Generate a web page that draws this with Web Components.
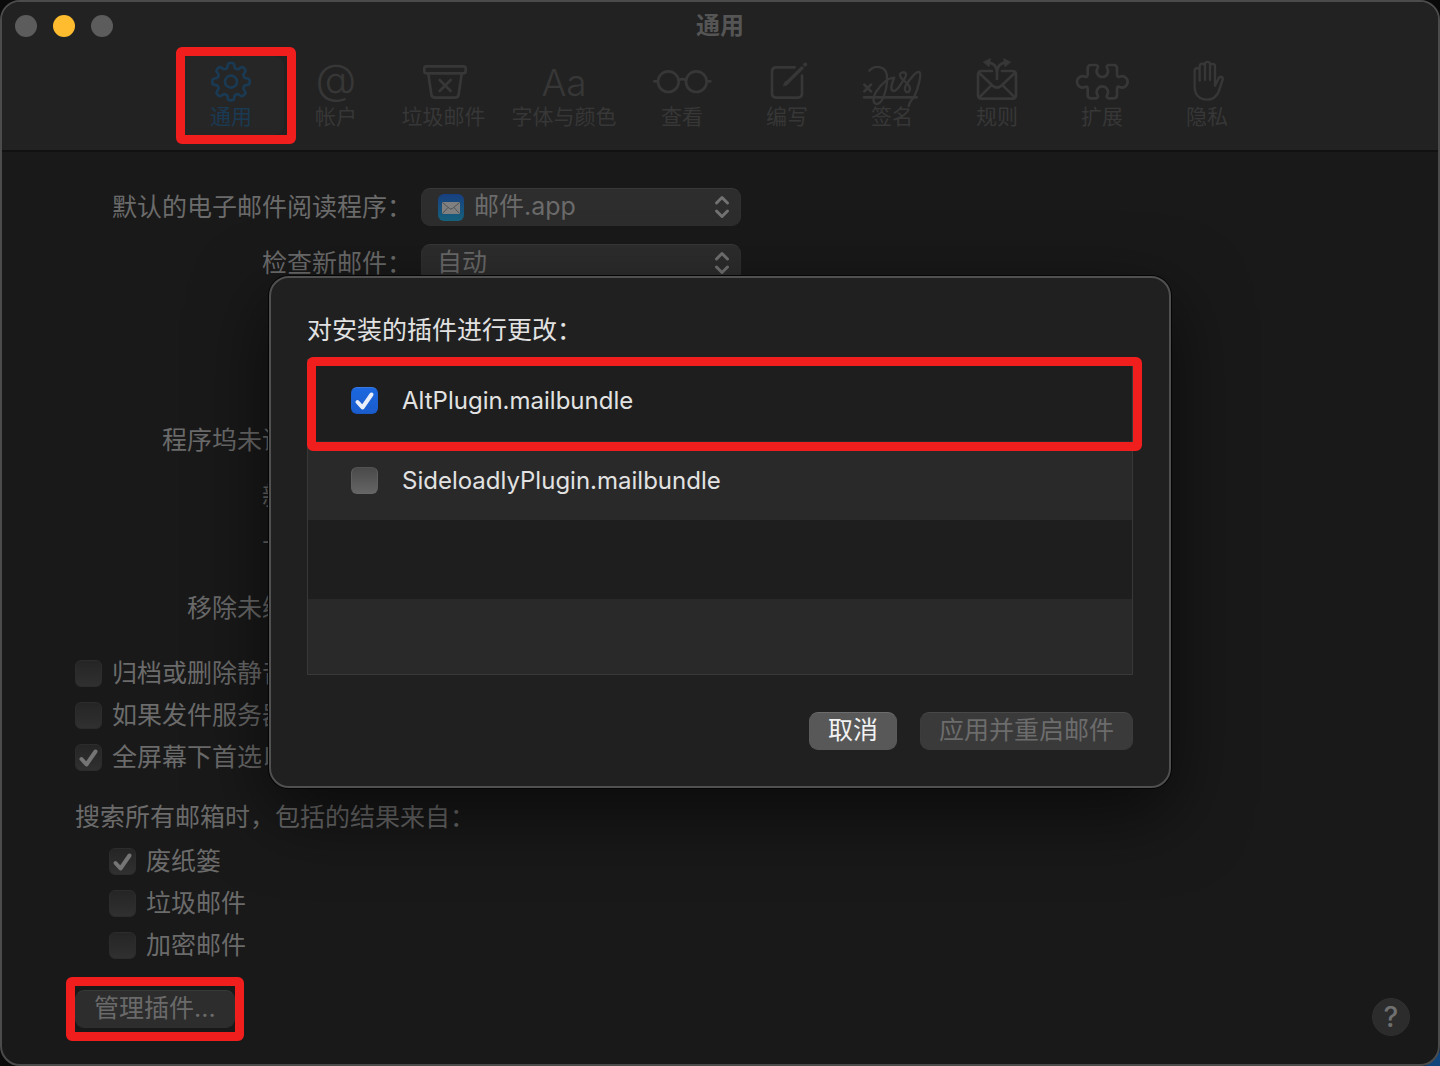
<!DOCTYPE html>
<html lang="zh-CN">
<head>
<meta charset="utf-8">
<title>通用</title>
<style>
  body {
    margin: 0;
    background: radial-gradient(circle at 100% 100%, #12457c 0 12px, #0a0a0a 20px);
    font-family: Inter, "Noto Sans CJK SC", sans-serif;
    font-size: 25px;
    line-height: 28px;
    color: #6b6b6b;
    --mark: #f01e1c;
  }
</style>
</head>
<body>
<settings-window heading="通用">
  <tool-item slot="tools" icon="gear" label="通用" selected></tool-item>
  <tool-item slot="tools" icon="at" label="帐户"></tool-item>
  <tool-item slot="tools" icon="junk" label="垃圾邮件"></tool-item>
  <tool-item slot="tools" icon="fonts" label="字体与颜色"></tool-item>
  <tool-item slot="tools" icon="glasses" label="查看"></tool-item>
  <tool-item slot="tools" icon="compose" label="编写"></tool-item>
  <tool-item slot="tools" icon="signature" label="签名"></tool-item>
  <tool-item slot="tools" icon="rules" label="规则"></tool-item>
  <tool-item slot="tools" icon="puzzle" label="扩展"></tool-item>
  <tool-item slot="tools" icon="hand" label="隐私"></tool-item>
  <general-pane></general-pane>
  <plugin-sheet slot="sheet"></plugin-sheet>
</settings-window>

<script>
const define = (name, render) => customElements.define(name, class extends HTMLElement {
  connectedCallback() {
    if (this.shadowRoot) return;
    this.attachShadow({ mode: 'open' }).innerHTML = render(this);
  }
});

/* Cog outline: rounded teeth around a centre point */
const cog = (cx, cy, n) => {
  const at = (r, deg) => {
    const a = (deg - 90) * Math.PI / 180;
    return (cx + r * Math.cos(a)).toFixed(1) + ' ' + (cy + r * Math.sin(a)).toFixed(1);
  };
  let d = '';
  for (let i = 0; i < n; i++) {
    const t = i * 360 / n;
    d += (i ? 'L' : 'M') + at(43, t - 15) + 'L' + at(50, t - 11) +
      'Q' + at(56, t - 9) + ' ' + at(56, t - 4) + 'L' + at(56, t + 4) +
      'Q' + at(56, t + 9) + ' ' + at(50, t + 11) + 'L' + at(43, t + 15) +
      'Q' + at(40, t + 22.5) + ' ' + at(43, t + 30);
  }
  return d + 'Z';
};

const ICONS = {
  gear: `<svg viewBox="603 174 180 144"><path d="${cog(693, 245, 8)}"/><circle cx="693" cy="245" r="18"/></svg>`,
  at: '<span class="glyph at">@</span>',
  fonts: '<span class="glyph">Aa</span>',
  junk: '<svg viewBox="69 54 180 144"><rect x="100" y="79" width="124" height="21" rx="6"/><path d="M112 102L121 163Q122 173 133 173H191Q202 173 203 163L212 102M146 120L179 153M179 120L146 153"/></svg>',
  glasses: '<svg viewBox="786 54 180 144"><circle cx="835" cy="125" r="31"/><circle cx="919" cy="125" r="31"/><path d="M866 120Q877 115 888 120M793 124H803M951 124H961"/></svg>',
  compose: '<svg viewBox="54 54 180 144"><path d="M167 82H112Q99 82 99 95V160Q99 173 112 173H176Q189 173 189 160V107"/><path stroke-width="10" d="M140 132L189 84"/><path stroke-width="4" d="M134 137L148 130L141 124Z"/><path stroke-width="11" d="M198 74L199 73"/></svg>',
  signature: '<svg viewBox="369 54 180 144"><path d="M376 134L396 154M396 134L376 154M375 172H533"/><path stroke-width="7" d="M391 92C408 74 438 78 443 102C448 134 434 190 414 192C400 192 401 172 411 156C425 135 443 113 466 113C458 132 452 150 463 153C478 154 484 130 496 117C505 105 502 95 491 97C477 100 483 113 494 121C507 131 520 144 509 156C498 160 495 146 500 137C512 117 531 94 541 96C550 103 535 150 526 169C519 180 512 183 509 198"/></svg>',
  rules: '<svg viewBox="24 54 180 144"><path d="M99 93H68Q57 93 57 104V166Q57 176 68 176H160Q171 176 171 166V104Q171 93 160 93H129M60 98L101 137Q114 148 127 137L168 98M61 172L97 136M167 172L131 136M114 117V96Q112 72 91 68M114 96Q116 72 137 68"/><path class="fill" stroke-width="3" d="M74 66L94 56L90 79ZM154 66L134 56L138 79Z"/></svg>',
  puzzle: '<svg viewBox="339 54 180 144"><path d="M396 75H412Q420 78 415 86A17 17 0 1 0 445 86Q440 78 448 75H464Q474 75 474 85V104Q475 113 482 110A17 17 0 1 1 482 141Q475 137 474 146V165Q474 175 464 175H448Q440 172 445 164A17 17 0 1 0 415 164Q420 172 412 175H396Q386 175 386 165V146Q385 137 378 141A17 17 0 1 1 378 110Q385 113 386 104V85Q386 75 396 75Z"/></svg>',
  hand: '<svg viewBox="657 54 180 144"><path stroke-width="7" d="M725 122V92A7.5 7.5 0 0 0 710 92V140C710 165 725 179 747 179C765 179 775 170 782 155L794 119C796 110 786 107 782 115L771 137V79A7.5 7.5 0 0 0 756 79V120M756 79V73A7.5 7.5 0 0 0 741 73V120M741 79A8 8 0 0 0 725 79V93"/></svg>'
};

/* Red annotation outline; its owner sets the inset */
define('mark-frame', () => `
  <style>
    :host { position: absolute; border: 9px solid var(--mark); border-radius: 6px; pointer-events: none; z-index: 1; }
  </style>`);

define('tool-item', el => `
  <style>
    :host { display: block; position: relative; }
    button {
      font: inherit; font-size: 21px; line-height: 22px; color: #373737;
      border: 0; margin: 0; padding: 2px 13px 6px; min-width: 105px; height: 79px;
      border-radius: 10px; background: none;
      display: flex; flex-direction: column; align-items: center;
    }
    button.selected { color: #1a3a54; background: #262626; }
    svg, .glyph { width: 60px; height: 48px; display: block; overflow: visible; }
    svg { fill: none; stroke: currentColor; stroke-width: 8; stroke-linecap: round; stroke-linejoin: round; }
    .fill { fill: currentColor; }
    .glyph { font-size: 37px; line-height: 50px; font-weight: 300; }
    .at { font-size: 42px; line-height: 42px; }
    mark-frame { inset: -9px -12px -9px -3px; }
  </style>
  <button type="button" class="${el.hasAttribute('selected') ? 'selected' : ''}">${ICONS[el.getAttribute('icon')]}<span>${el.getAttribute('label')}</span></button>
  ${el.hasAttribute('selected') ? '<mark-frame></mark-frame>' : ''}`);

define('settings-window', el => `
  <style>
    :host {
      display: flex; flex-direction: column; position: relative; box-sizing: border-box;
      min-height: 100vh; overflow: hidden;
      border: 2px solid #4b4b4b; border-radius: 20px; background: #191919;
    }
    header { background: #222; border-bottom: 2px solid #111; }
    .title { display: grid; grid-template-columns: 1fr auto 1fr; align-items: center; height: 48px; padding: 0 13px; }
    .lights { display: flex; gap: 16px; }
    .lights button { width: 22px; height: 22px; padding: 0; border: 0; border-radius: 50%; background: #5c5c5c; }
    .lights .min { background: #febc2e; }
    h1 { margin: 0; font-size: 24px; line-height: 28px; font-weight: 700; color: #555; }
    nav { display: flex; justify-content: center; padding: 6px 2px 15px 0; }
    .sheet { position: absolute; inset: 0; display: flex; justify-content: center; align-items: flex-start; padding-top: 274px; }
  </style>
  <header>
    <div class="title">
      <div class="lights">
        <button type="button" aria-label="关闭"></button><button type="button" class="min" aria-label="最小化"></button><button type="button" aria-label="缩放"></button>
      </div>
      <h1>${el.getAttribute('heading')}</h1>
    </div>
    <nav><slot name="tools"></slot></nav>
  </header>
  <slot></slot>
  <div class="sheet"><slot name="sheet"></slot></div>`);

define('form-row', el => {
  const value = el.getAttribute('value');
  const app = el.hasAttribute('app');
  return `
  <style>
    :host { display: grid; grid-template-columns: 337px 320px; gap: 9px; align-items: center; min-height: 38px; }
    label, .label { text-align: right; white-space: nowrap; line-height: 36px; }
    .pop { display: grid; align-items: center; }
    .pop > * { grid-area: 1 / 1; }
    select {
      appearance: none; font: inherit; line-height: 32px; color: inherit; width: 100%; height: 38px;
      padding: 0 52px 2px ${app ? 52 : 15}px; border: 1px solid #333; border-color: #383838 #303030 #2e2e2e; border-radius: 9px;
      background: #2d2d2d;
    }
    svg { pointer-events: none; }
    .arrows { justify-self: end; margin-right: 10px; fill: none; stroke: #727272; stroke-width: 3; stroke-linecap: round; stroke-linejoin: round; }
    .mail { margin-left: 17px; }
  </style>
  ${value ? `<label for="s">${el.getAttribute('label')}</label>
  <div class="pop">
    <select id="s"><option>${value}</option></select>
    ${app ? `<svg class="mail" width="26" height="27" viewBox="0 0 26 27">
      <defs><linearGradient id="g" x1="0" y1="0" x2="0" y2="1"><stop offset="0" stop-color="#173f80"/><stop offset="1" stop-color="#17627c"/></linearGradient></defs>
      <rect width="26" height="27" rx="6" fill="url(#g)"/><rect x="4" y="8" width="18" height="12" rx="1" fill="#808080"/>
      <path d="M4.500 8.500L11.500 14.500Q13 15.700 14.500 14.500L21.500 8.500M4.500 19.500L10 13.500M21.500 19.500L16 13.500" fill="none" stroke="#4e5256" stroke-width="1"/></svg>` : ''}
    <svg class="arrows" width="18" height="24" viewBox="0 0 18 24"><path d="M3.500 8L9 2.500L14.500 8M3.500 16L9 21.500L14.500 16"/></svg>
  </div>` : `<span class="label">${el.getAttribute('label')}</span>`}`;
});

define('check-row', el => `
  <style>
    :host { display: block; }
    label { display: flex; align-items: center; gap: var(--check-gap, 10px); white-space: nowrap; min-height: 28px; }
    .box { display: grid; }
    .box > * { grid-area: 1 / 1; }
    input {
      appearance: none; margin: 0; width: 27px; height: 27px; border-radius: 6px;
      border: 1px solid #2c2c2c; background: linear-gradient(#252525, #303030);
    }
    svg { display: none; pointer-events: none; fill: none; stroke: #757575; stroke-width: 4; stroke-linecap: round; stroke-linejoin: round; }
    input:checked + svg { display: block; }
    :host([bright]) input { border-color: #525252 #606060 #686868; background: linear-gradient(#4a4a4a, #656565); }
    :host([bright]) input:checked { border-color: #3a7ae0 #1c60d2 #1a58c4; background: linear-gradient(#1c68e0, #1a5ccc); }
    :host([bright]) svg { stroke: #e8eefa; }
  </style>
  <label for="c"><span class="box"><input id="c" type="checkbox" ${el.hasAttribute('checked') ? 'checked' : ''}><svg width="27" height="27" viewBox="0 0 27 27"><path d="M6.500 15L11.500 20.500L20.500 7.500"/></svg></span><span>${el.getAttribute('label')}</span></label>`);

define('push-button', el => `
  <style>
    :host { display: inline-block; position: relative; }
    button {
      font: inherit; line-height: 34px; color: #6a6a6a; height: 38px; padding: 0 18px 2px; white-space: nowrap;
      border: 1px solid #2e2e2e; border-top-color: #393939; border-radius: 9px; background: #2d2d2d;
    }
    :host([kind="primary"]) button { color: #f2f2f2; background: #585858; border-color: #6c6c6c #5a5a5a #585858; }
    :host([kind="disabled"]) button { color: #6c6c6c; background: #3a3a3a; border-color: #484848 #3c3c3c #3a3a3a; }
    mark-frame { inset: -13px -9px; }
  </style>
  <button type="button" ${el.getAttribute('kind') === 'disabled' ? 'disabled' : ''}><slot></slot></button>
  ${el.hasAttribute('marked') ? '<mark-frame></mark-frame>' : ''}`);

define('general-pane', () => `
  <style>
    :host { display: block; padding: 36px 28px 28px 73px; }
    .rows { display: grid; gap: 18px; }
    .more { margin-top: 139px; }
    .checks { display: grid; gap: 14px; margin-top: 32px; justify-items: start; }
    p { margin: 32px 0 0; }
    .nested { margin: 16px 0 0 34px; }
    footer { display: flex; justify-content: space-between; align-items: flex-start; margin-top: 31px; }
    .help {
      font: inherit; font-size: 28px; line-height: 34px; color: #707070; width: 38px; height: 38px; padding: 0; margin-top: 8px;
      border: 1px solid #303030; border-radius: 50%; background: #2c2c2c; font-weight: 500;
    }
  </style>
  <div class="rows">
    <form-row label="默认的电子邮件阅读程序：" value="邮件.app" app></form-row>
    <form-row label="检查新邮件：" value="自动"></form-row>
  </div>
  <div class="rows more">
    <form-row label="程序坞未读邮件计数："></form-row>
    <form-row label="新邮件声音："></form-row>
    <form-row label="下载文件夹："></form-row>
    <form-row label="移除未编辑的下载："></form-row>
  </div>
  <div class="checks">
    <check-row label="归档或删除静音"></check-row>
    <check-row label="如果发件服务器"></check-row>
    <check-row label="全屏幕下首选以" checked></check-row>
  </div>
  <p>搜索所有邮箱时，包括的结果来自：</p>
  <div class="checks nested">
    <check-row label="废纸篓" checked></check-row>
    <check-row label="垃圾邮件"></check-row>
    <check-row label="加密邮件"></check-row>
  </div>
  <footer>
    <push-button marked>管理插件...</push-button>
    <button type="button" class="help">?</button>
  </footer>`);

define('plugin-sheet', () => `
  <style>
    :host {
      display: block; box-sizing: border-box; width: 902px; max-width: 100%; padding: 36px;
      border: 2px solid #505050; border-radius: 20px; background: #202020; color: #e2e2e2;
      box-shadow: 0 0 0 1px #050505, 0 24px 76px rgba(0, 0, 0, .6);
    }
    h2 { margin: 0 0 13px; font: inherit; line-height: 32px; }
    .list { position: relative; }
    ul { list-style: none; margin: 0; padding: 0; border: 1px solid #383838; background: #1e1e1e; }
    li { height: 79px; display: flex; align-items: center; padding-left: 43px; font-size: 24px; --check-gap: 24px; }
    li:nth-child(even) { background: #292929; }
    li:first-child { height: 81px; }
    li:last-child { height: 75px; }
    mark-frame { inset: -2px -9px auto 0; height: 76px; }
    footer { display: flex; justify-content: flex-end; gap: 23px; margin-top: 37px; }
  </style>
  <h2>对安装的插件进行更改：</h2>
  <div class="list">
    <ul>
      <li><check-row bright checked label="AltPlugin.mailbundle"></check-row></li>
      <li><check-row bright label="SideloadlyPlugin.mailbundle"></check-row></li>
      <li></li>
      <li></li>
    </ul>
    <mark-frame></mark-frame>
  </div>
  <footer>
    <push-button kind="primary">取消</push-button>
    <push-button kind="disabled">应用并重启邮件</push-button>
  </footer>`);
</script>
</body>
</html>
